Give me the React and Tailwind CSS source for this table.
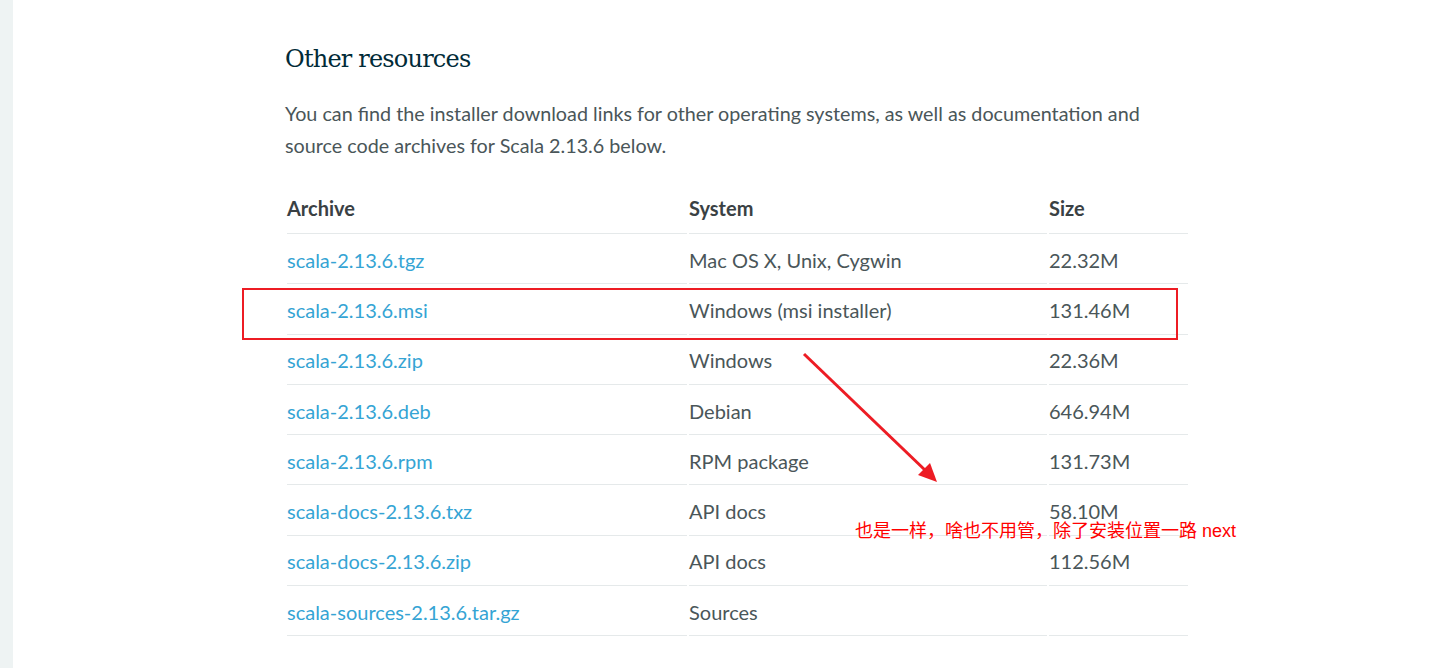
import React from "react";

const rows = [
  ["scala-2.13.6.tgz", "Mac OS X, Unix, Cygwin", "22.32M"],
  ["scala-2.13.6.msi", "Windows (msi installer)", "131.46M"],
  ["scala-2.13.6.zip", "Windows", "22.36M"],
  ["scala-2.13.6.deb", "Debian", "646.94M"],
  ["scala-2.13.6.rpm", "RPM package", "131.73M"],
  ["scala-docs-2.13.6.txz", "API docs", "58.10M"],
  ["scala-docs-2.13.6.zip", "API docs", "112.56M"],
  ["scala-sources-2.13.6.tar.gz", "Sources", ""],
];

export default function App() {
  return (
    <div className="relative flex h-[668px] w-[1448px] overflow-hidden bg-white font-['Lato',sans-serif]">
      <div className="w-[13px] shrink-0 bg-[#eef3f3]"></div>

      <main className="pl-[272px] pt-[41px]">
        <h2 className="font-['DejaVu_Serif',serif] text-[24px] leading-[36px] tracking-[-0.8px] text-[#012b38]">
          Other resources
        </h2>
        <p className="mt-[21px] w-[905px] text-[19.75px] leading-[32px] text-[#4a5659]">
          You can find the installer download links for other operating systems, as well as documentation and
          source code archives for Scala 2.13.6 below.
        </p>

        <table className="mt-[22px] w-[905px] border-separate border-spacing-[2px] text-[20px]">
          <thead>
            <tr>
              <th className="h-[48px] w-[400px] border-b border-[#e5e9ea] pb-[4px] text-left font-bold text-[#3a4144]">Archive</th>
              <th className="h-[48px] w-[358px] border-b border-[#e5e9ea] pb-[4px] text-left font-bold text-[#3a4144]">System</th>
              <th className="h-[48px] border-b border-[#e5e9ea] pb-[4px] text-left font-bold text-[#3a4144]">Size</th>
            </tr>
          </thead>
          <tbody>
            {rows.map(([file, sys, size]) => (
              <tr key={file}>
                <td className="h-[48.3px] border-b border-[#e5e9ea] text-[#35a4d4]">{file}</td>
                <td className="h-[48.3px] border-b border-[#e5e9ea] text-[#4a5659]">{sys}</td>
                <td className="h-[48.3px] border-b border-[#e5e9ea] text-[#4a5659]">{size}</td>
              </tr>
            ))}
          </tbody>
        </table>
      </main>

      {/* annotation overlays */}
      <div className="absolute left-[242px] top-[288px] h-[52px] w-[936px] border-2 border-[#ed1c24]"></div>
      <svg className="absolute left-0 top-0" width="1448" height="668">
        <line x1="804" y1="354" x2="926" y2="471" stroke="#ed1c24" strokeWidth="3" />
        <polygon points="937,482 918,475 930,463" fill="#ed1c24" />
      </svg>
      <div className="absolute left-[855px] top-[518px] font-['Liberation_Sans','Noto_Sans_CJK_SC',sans-serif] text-[18px] leading-[26px] text-[#ff0000]">
        也是一样，啥也不用管，除了安装位置一路 next
      </div>
    </div>
  );
}
